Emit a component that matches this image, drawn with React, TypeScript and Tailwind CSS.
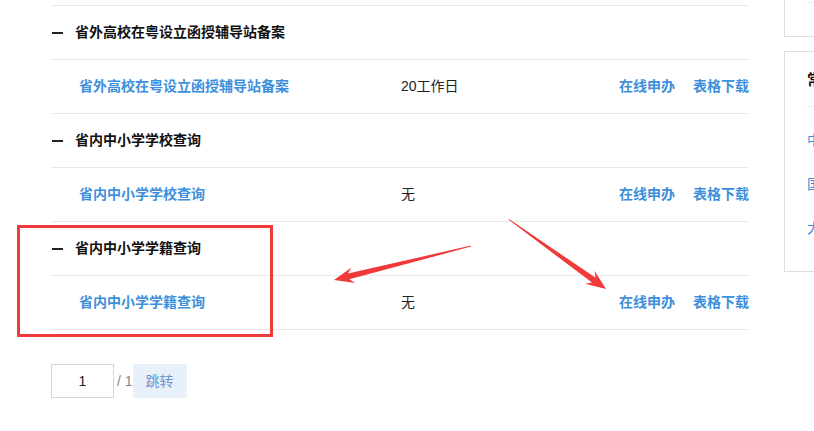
type Item = {
  group: string;
  name: string;
  time: string;
};

const items: Item[] = [
  { group: "省外高校在粤设立函授辅导站备案", name: "省外高校在粤设立函授辅导站备案", time: "20工作日" },
  { group: "省内中小学学校查询", name: "省内中小学学校查询", time: "无" },
  { group: "省内中小学学籍查询", name: "省内中小学学籍查询", time: "无" },
];

function GroupRow({ title }: { title: string }) {
  return (
    <div className="h-[54px] border-t border-[#e8e8e8] flex items-center">
      <span className="ml-[1px] w-[11px] h-[2px] bg-[#222]" />
      <span className="ml-[12px] text-[14px] font-bold text-[#111]">{title}</span>
    </div>
  );
}

function ItemRow({ item }: { item: Item }) {
  return (
    <div className="h-[54px] border-t border-[#e8e8e8] flex items-center text-[14px] whitespace-nowrap">
      <a className="ml-[28px] w-[322px] shrink-0 font-bold text-[#3d8fdc] cursor-pointer">{item.name}</a>
      <span className="w-[218px] shrink-0 text-[#222]">{item.time}</span>
      <a className="shrink-0 font-bold text-[#3d8fdc] cursor-pointer">在线申办</a>
      <a className="ml-[18px] shrink-0 font-bold text-[#3d8fdc] cursor-pointer">表格下载</a>
    </div>
  );
}

export default function App() {
  return (
    <div
      className="relative w-[814px] h-[431px] overflow-hidden bg-white flex"
      style={{ fontFamily: '"Liberation Sans", "Noto Sans CJK SC", sans-serif' }}
    >
      <div className="ml-[51px] w-[697px] pt-[5px] shrink-0">
        {items.map((it) => (
          <div key={it.name}>
            <GroupRow title={it.group} />
            <ItemRow item={it} />
          </div>
        ))}
        <div className="border-t border-[#e8e8e8]" />
        <div className="mt-[34px] flex items-start">
          <div className="w-[63px] h-[34px] border border-[#d6d6d6] flex items-center justify-center text-[14px] text-[#222]">
            1
          </div>
          <span className="ml-[3px] mt-[7px] text-[14px] text-[#888]">/ 1</span>
          <button className="ml-0 w-[54px] h-[34px] bg-[#e8f1fa] text-[14px] text-[#6a94d4]">跳转</button>
        </div>
      </div>

      <div className="ml-[36px] w-[220px] shrink-0">
        <div className="h-[37px] border-x border-b border-[#dedede] pt-[2px]">
          <div className="ml-[22px] border-t border-[#e8e8e8]" />
        </div>
        <div className="mt-[14px] h-[221px] border border-[#dedede]">
          <div className="h-[55px] ml-[22px] border-b border-[#e8e8e8] flex items-center pt-[2px]">
            <span className="text-[15px] font-bold text-[#111] whitespace-nowrap">常用服务</span>
          </div>
          <div className="ml-[22px] pt-[23px] flex flex-col gap-[23px] text-[14px] text-[#3d8fdc] whitespace-nowrap">
            <span>中国教育考试网</span>
            <span>国家政务服务平台</span>
            <span>大学生就业服务</span>
          </div>
        </div>
      </div>

      {/* annotation overlay */}
      <div className="absolute left-[17px] top-[225px] w-[256px] h-[112px] border-[3px] border-[#f03a3a]" />
      <svg className="absolute inset-0 pointer-events-none" width="814" height="431">
        <polygon
          fill="#f03a3a"
          points="471,245.6 347.9,273.5 351.5,267.4 334,280 355.3,283 349.3,279.3 471,246.6"
        />
        <polygon
          fill="#f03a3a"
          points="509,219 595.6,277.8 594.5,270.8 606,289 585.1,283.8 592,282.6 508.4,219.6"
        />
      </svg>
    </div>
  );
}
